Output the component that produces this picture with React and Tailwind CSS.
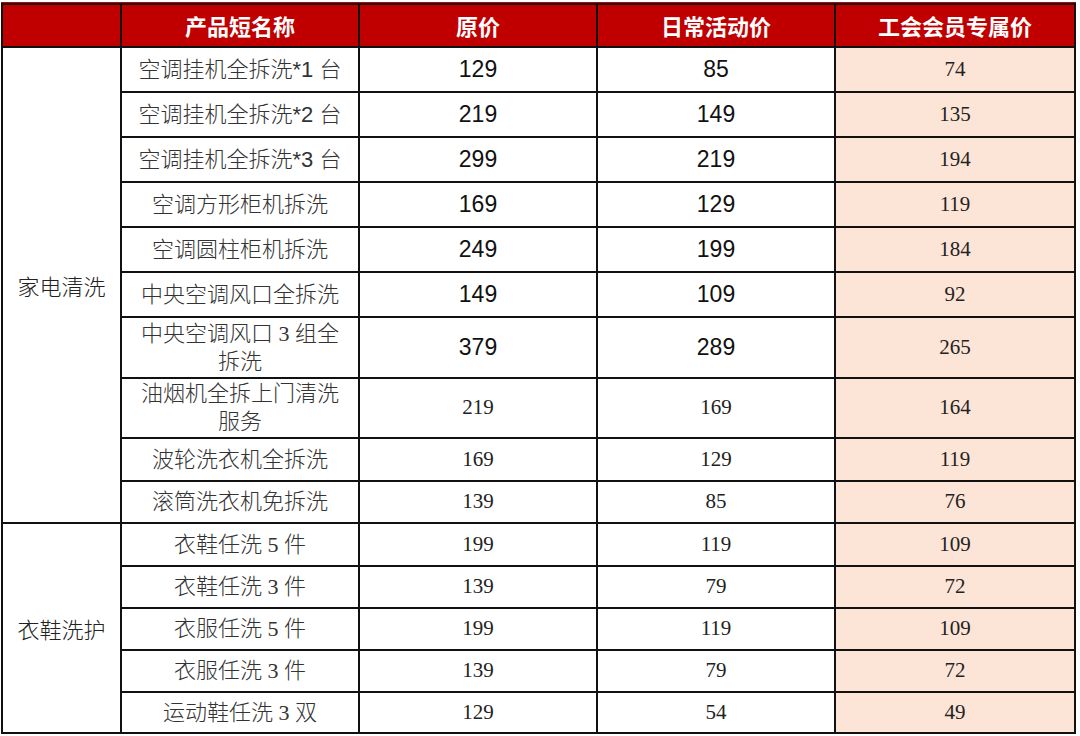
const SANS = { fontFamily: '"Liberation Sans", "Noto Sans CJK SC", sans-serif' };

const rows = [
  { name: '空调挂机全拆洗*1 台', a: '129', b: '85', c: '74', h: 'h-[45px]', sans: true, sansName: true },
  { name: '空调挂机全拆洗*2 台', a: '219', b: '149', c: '135', h: 'h-[45px]', sans: true, sansName: true },
  { name: '空调挂机全拆洗*3 台', a: '299', b: '219', c: '194', h: 'h-[45px]', sans: true, sansName: true },
  { name: '空调方形柜机拆洗', a: '169', b: '129', c: '119', h: 'h-[45px]', sans: true },
  { name: '空调圆柱柜机拆洗', a: '249', b: '199', c: '184', h: 'h-[45px]', sans: true },
  { name: '中央空调风口全拆洗', a: '149', b: '109', c: '92', h: 'h-[45px]', sans: true },
  { name: ['中央空调风口 3 组全', '拆洗'], a: '379', b: '289', c: '265', h: 'h-[61px]', sans: true },
  { name: ['油烟机全拆上门清洗', '服务'], a: '219', b: '169', c: '164', h: 'h-[60px]' },
  { name: '波轮洗衣机全拆洗', a: '169', b: '129', c: '119', h: 'h-[43px]' },
  { name: '滚筒洗衣机免拆洗', a: '139', b: '85', c: '76', h: 'h-[42px]' },
  { name: '衣鞋任洗 5 件', a: '199', b: '119', c: '109', h: 'h-[43px]' },
  { name: '衣鞋任洗 3 件', a: '139', b: '79', c: '72', h: 'h-[42px]' },
  { name: '衣服任洗 5 件', a: '199', b: '119', c: '109', h: 'h-[42px]' },
  { name: '衣服任洗 3 件', a: '139', b: '79', c: '72', h: 'h-[42px]' },
  { name: '运动鞋任洗 3 双', a: '129', b: '54', c: '49', h: 'h-[41px]' },
];

const cell = 'border-2 border-[#111] text-center align-middle p-0';

function NumCell({ v, sans }) {
  if (sans) {
    return (
      <td className={`${cell} text-[23px] text-[#111]`} style={SANS}>
        {v}
      </td>
    );
  }
  return <td className={`${cell} text-[21px] text-[#222]`}>{v}</td>;
}

export default function App() {
  return (
    <div
      className="bg-white w-[1080px] h-[736px] pt-[2px] pl-[1px]"
      style={{ fontFamily: '"Liberation Serif", "Noto Sans CJK SC", serif' }}
    >
      <div className="h-[1px] w-[1075px] bg-[#c00000]" />
      <table className="border-collapse table-fixed w-[1075px]">
        <colgroup>
          <col className="w-[119px]" />
          <col className="w-[238px]" />
          <col className="w-[238px]" />
          <col className="w-[238px]" />
          <col />
        </colgroup>
        <thead>
          <tr
            className="h-[43px] bg-[#c00000] text-white text-[22px] font-bold"
            style={{ fontFamily: '"Noto Sans CJK SC", sans-serif' }}
          >
            <th className={cell}></th>
            <th className={cell}>产品短名称</th>
            <th className={cell}>原价</th>
            <th className={cell}>日常活动价</th>
            <th className={cell}>工会会员专属价</th>
          </tr>
        </thead>
        <tbody>
          {rows.map((r, i) => (
            <tr key={i} className={r.h}>
              {i === 0 && (
                <td
                  rowSpan={10}
                  className={`${cell} text-[22px] text-[#222] font-light`}
                  style={{ fontFamily: '"Noto Sans CJK SC", sans-serif' }}
                >
                  家电清洗
                </td>
              )}
              {i === 10 && (
                <td
                  rowSpan={5}
                  className={`${cell} text-[22px] text-[#222] font-light`}
                  style={{ fontFamily: '"Noto Sans CJK SC", sans-serif' }}
                >
                  衣鞋洗护
                </td>
              )}
              <td
                className={`${cell} text-[22px] leading-[28px] text-[#333] font-light`}
                style={r.sansName ? SANS : undefined}
              >
                {Array.isArray(r.name) ? (
                  <>
                    {r.name[0]}
                    <br />
                    {r.name[1]}
                  </>
                ) : (
                  r.name
                )}
              </td>
              <NumCell v={r.a} sans={r.sans} />
              <NumCell v={r.b} sans={r.sans} />
              <td className={`${cell} bg-[#fce4d6] text-[21px] text-[#222]`}>{r.c}</td>
            </tr>
          ))}
        </tbody>
      </table>
    </div>
  );
}
